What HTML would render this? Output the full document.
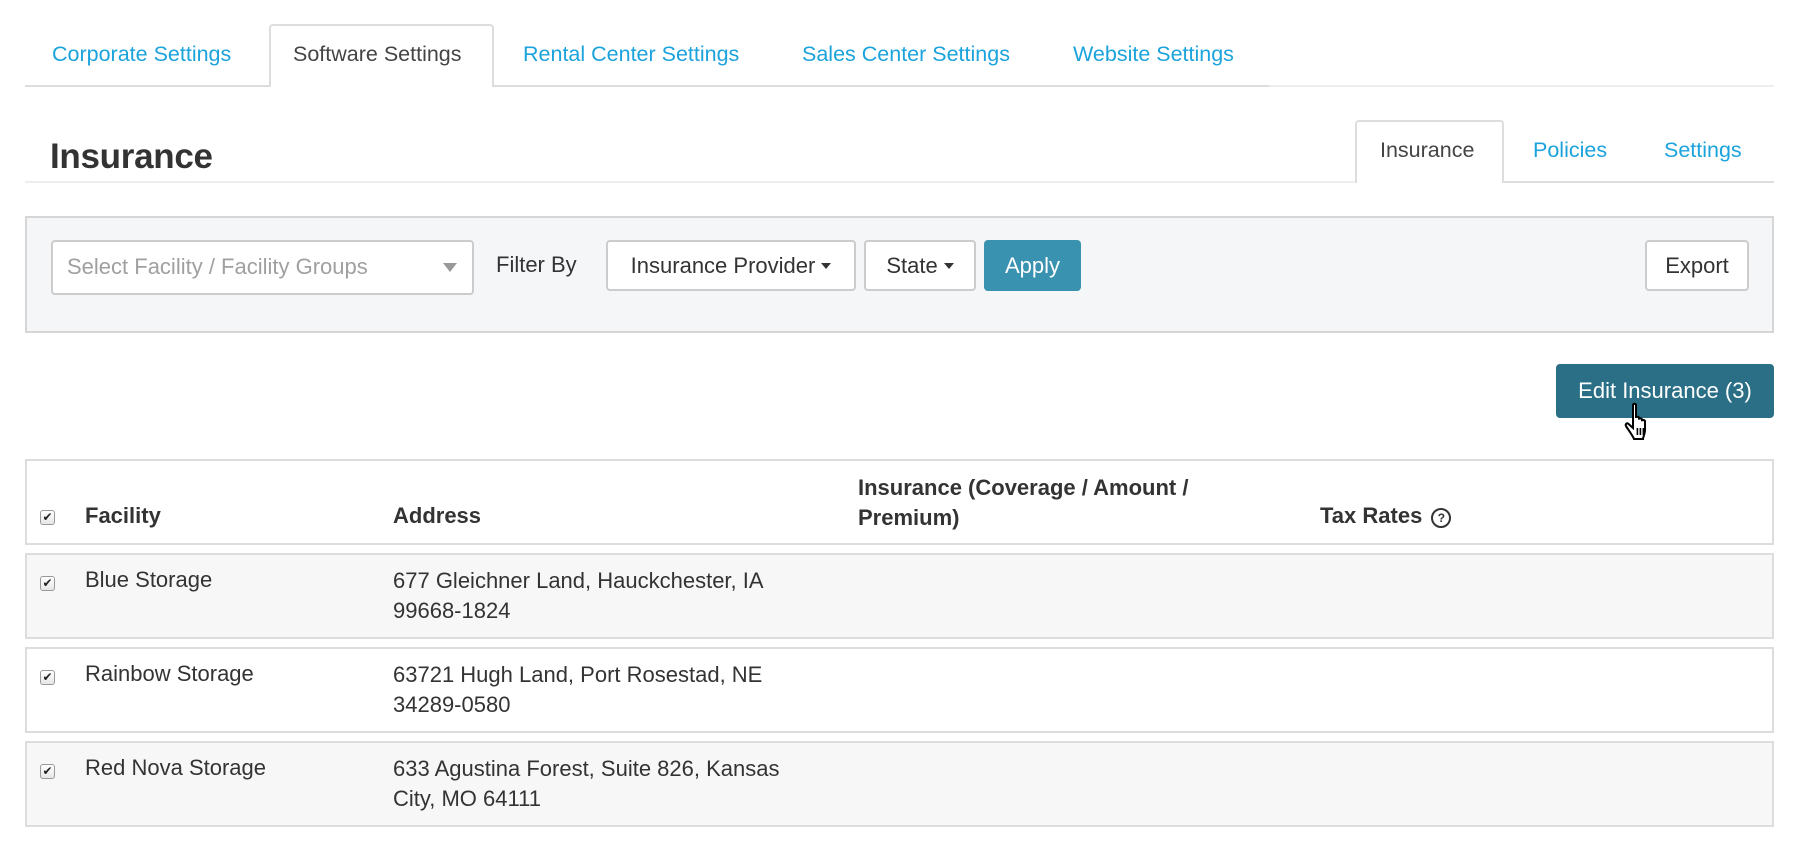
<!DOCTYPE html>
<html><head><meta charset="utf-8"><style>
*{box-sizing:border-box;margin:0;padding:0}
body{width:1800px;height:844px;background:#fff;font-family:"Liberation Sans",Arial,sans-serif;color:#333;position:relative;overflow:hidden;font-size:22px}
.a{position:absolute;white-space:nowrap}
.blue{color:#1ba3dc}
.line{position:absolute;height:2px}
.tab{position:absolute;border:2px solid #ddd;border-bottom:none;background:#fff;border-radius:4px 4px 0 0}
.btn{position:absolute;border:2px solid #ccc;border-radius:4px;background:#fff;display:flex;align-items:center;justify-content:center;font-size:22px;color:#333}
.caret{display:inline-block;width:0;height:0;border-left:5px solid transparent;border-right:5px solid transparent;border-top:6px solid #333;margin-left:6px;vertical-align:middle}
.row{position:absolute;left:25px;width:1749px;border:2px solid #ddd}
.cb{position:absolute;width:15px;height:15px;border:1px solid #999;border-radius:3px;background:linear-gradient(#fff,#e6e6e6);font-size:12px;line-height:13px;text-align:center;color:#222}
.h{font-weight:bold}
.t{font-size:21.5px}
</style></head><body>
<div class="line" style="left:25px;top:85px;width:1244px;background:#ddd"></div>
<div class="line" style="left:1269px;top:85px;width:505px;background:#eee"></div>
<div class="tab" style="left:269px;top:24px;width:225px;height:63px"></div>
<div class="a blue t" style="left:52px;top:42px">Corporate Settings</div>
<div class="a t" style="left:293px;top:42px;color:#444">Software Settings</div>
<div class="a blue t" style="left:523px;top:42px">Rental Center Settings</div>
<div class="a blue t" style="left:802px;top:42px">Sales Center Settings</div>
<div class="a blue t" style="left:1073px;top:42px">Website Settings</div>

<div class="a" style="left:50px;top:137px;font-size:35px;font-weight:bold;color:#333;letter-spacing:-0.3px">Insurance</div>
<div class="line" style="left:25px;top:181px;width:1749px;background:#eee"></div>
<div class="line" style="left:1503px;top:181px;width:271px;background:#ddd"></div>
<div class="tab" style="left:1355px;top:120px;width:149px;height:63px"></div>
<div class="a t" style="left:1380px;top:138px;color:#444">Insurance</div>
<div class="a blue t" style="left:1533px;top:138px">Policies</div>
<div class="a blue t" style="left:1664px;top:138px">Settings</div>

<div class="a" style="left:25px;top:216px;width:1749px;height:117px;background:#f5f6f8;border:2px solid #d6d6d6"></div>
<div class="a" style="left:51px;top:240px;width:423px;height:55px;background:#fff;border:2px solid #ccc;border-radius:4px"></div>
<div class="a" style="left:67px;top:254px;color:#a0a0a0">Select Facility / Facility Groups</div>
<div class="a" style="left:443px;top:263px;width:0;height:0;border-left:7px solid transparent;border-right:7px solid transparent;border-top:9px solid #999"></div>
<div class="a" style="left:496px;top:252px;color:#333">Filter By</div>
<div class="btn" style="left:606px;top:240px;width:250px;height:51px">Insurance Provider<span class="caret"></span></div>
<div class="btn" style="left:864px;top:240px;width:112px;height:51px">State<span class="caret"></span></div>
<div class="btn" style="left:984px;top:240px;width:97px;height:51px;background:#3892b0;border-color:#3892b0;color:#fff">Apply</div>
<div class="btn" style="left:1645px;top:240px;width:104px;height:51px">Export</div>

<div class="btn" style="left:1556px;top:364px;width:218px;height:54px;background:#2a6f86;border-color:#2a6f86;color:#fff">Edit Insurance (3)</div>
<svg class="a" style="left:1623px;top:402px" width="34" height="40" viewBox="0 0 17 20"><path d="M5 1.5c0-.8 1.5-.8 1.5 0V8c0-.8 1.5-.8 1.5 0v.8c0-.8 1.5-.8 1.5 0v.8c0-.8 1.5-.8 1.5 0V14c0 2-1 3.5-1 4.5H5.5C5 17 2 13 1.5 12c-.5-1 .5-1.8 1.3-1L5 13z" fill="#fff" stroke="#000" stroke-width="1"/><path d="M7.2 13v3.5M8.7 13v3.5M10.2 13v3.5" stroke="#000" stroke-width=".8"/></svg>

<div class="row" style="top:459px;height:86px;background:#fff"></div>
<div class="cb" style="left:40px;top:510px">✔</div>
<div class="a h" style="left:85px;top:503px">Facility</div>
<div class="a h" style="left:393px;top:503px">Address</div>
<div class="a h" style="left:858px;top:473px;line-height:30px">Insurance (Coverage / Amount /<br>Premium)</div>
<div class="a h" style="left:1320px;top:503px">Tax Rates <span style="display:inline-block;width:20px;height:20px;border:2px solid #333;border-radius:50%;font-size:12px;line-height:16px;text-align:center;vertical-align:1px;margin-left:3px">?</span></div>

<div class="row" style="top:553px;height:86px;background:#f7f7f7"></div>
<div class="cb" style="left:40px;top:576px">✔</div>
<div class="a" style="left:85px;top:567px">Blue Storage</div>
<div class="a" style="left:393px;top:566px;line-height:30px">677 Gleichner Land, Hauckchester, IA<br>99668-1824</div>

<div class="row" style="top:647px;height:86px;background:#fff"></div>
<div class="cb" style="left:40px;top:670px">✔</div>
<div class="a" style="left:85px;top:661px">Rainbow Storage</div>
<div class="a" style="left:393px;top:660px;line-height:30px">63721 Hugh Land, Port Rosestad, NE<br>34289-0580</div>

<div class="row" style="top:741px;height:86px;background:#f7f7f7"></div>
<div class="cb" style="left:40px;top:764px">✔</div>
<div class="a" style="left:85px;top:755px">Red Nova Storage</div>
<div class="a" style="left:393px;top:754px;line-height:30px">633 Agustina Forest, Suite 826, Kansas<br>City, MO 64111</div>
</body></html>
